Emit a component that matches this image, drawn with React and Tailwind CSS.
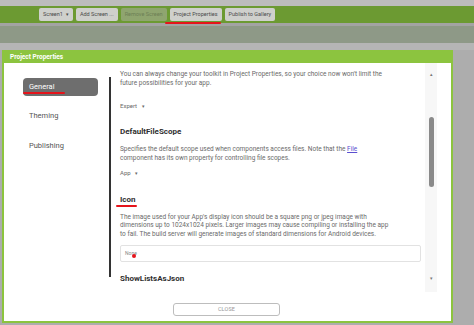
import React from 'react';

const Caret = () => <span className="ml-[3px] text-[5px] align-middle">▾</span>;

function ToolButton({ children, disabled }) {
  return (
    <div
      className={
        'h-[13px] px-[4px] flex items-center rounded-[2px] text-[5.5px] ' +
        (disabled ? 'bg-[#8fa56f] text-[#6d7f55]' : 'bg-[#cfd0cc] text-[#4a4a4a]')
      }
    >
      {children}
    </div>
  );
}

const Title = ({ children, className = '' }) => (
  <div className={'text-[8px] font-bold text-[#2f2f2f] leading-[10px] ' + className}>{children}</div>
);

export default function App() {
  return (
    <div
      className="w-[474px] h-[325px] bg-[#adadad] overflow-hidden relative flex flex-col"
      style={{ fontFamily: 'Roboto, "Liberation Sans", sans-serif' }}
    >
      {/* page behind the overlay */}
      <div className="h-[6px] shrink-0 bg-[#bcbcbc]" />
      <div className="h-[17px] shrink-0 bg-[#6c9a32] flex items-center gap-[3px] pl-[39px]">
        <ToolButton>Screen1 <Caret /></ToolButton>
        <ToolButton>Add Screen ...</ToolButton>
        <ToolButton disabled>Remove Screen</ToolButton>
        <ToolButton>Project Properties</ToolButton>
        <ToolButton>Publish to Gallery</ToolButton>
      </div>
      <div className="h-[3px] shrink-0 bg-[#a3a3a3]" />
      <div className="h-[17px] shrink-0 bg-[#8e9987]" />
      <div className="h-[7px] shrink-0 bg-[#b5b5b5]" />

      <div className="flex pl-[2px]">
        {/* dialog */}
        <div className="w-[451px] shrink-0 h-[273px] border-2 border-[#8cc43f] bg-white flex flex-col">
          <div className="h-[11px] shrink-0 bg-[#8cc43f] px-[6px] flex items-center text-white font-bold text-[6.5px]">
            Project Properties
          </div>
          <div className="flex flex-1 min-h-0">
            {/* sidebar */}
            <div className="w-[105px] shrink-0 pl-[19px] pt-[15px] text-[7.5px] text-[#555]">
              <div className="w-[75px] h-[18px] rounded-[4px] bg-[#6e6e6e] text-white flex items-center pl-[6px]">
                General
              </div>
              <div className="pl-[6px] mt-[14px]">Theming</div>
              <div className="pl-[6px] mt-[19px]">Publishing</div>
            </div>
            {/* content */}
            <div className="flex-1 min-w-0 flex flex-col">
              <div className="flex h-[229px]">
                <div className="w-[2px] shrink-0 bg-[#333] mt-[14px] h-[200px]" />
                <div className="flex-1 min-w-0 pl-[9px] pt-[7px] text-[6.5px] leading-[9px] text-[#6a6a6a] overflow-hidden">
                  <div>You can always change your toolkit in Project Properties, so your choice now won't limit the</div>
                  <div>future possibilities for your app.</div>
                  <div className="mt-[13px] text-[6px]">Expert <Caret /></div>
                  <Title className="mt-[16px]">DefaultFileScope</Title>
                  <div className="mt-[8px]">
                    Specifies the default scope used when components access files. Note that the{' '}
                    <span className="text-[#5b4fd0] underline">File</span>
                  </div>
                  <div>component has its own property for controlling file scopes.</div>
                  <div className="mt-[5px] text-[6px]">App <Caret /></div>
                  <Title className="mt-[17px]">Icon</Title>
                  <div className="mt-[8px] leading-[8.5px]">
                    <div>The image used for your App's display icon should be a square png or jpeg image with</div>
                    <div>dimensions up to 1024x1024 pixels. Larger images may cause compiling or installing the app</div>
                    <div>to fail. The build server will generate images of standard dimensions for Android devices.</div>
                  </div>
                  <div className="mt-[7px] w-[301px] h-[17px] border border-[#e2e2e2] rounded-[2px] flex items-center pl-[4px] text-[5px] text-[#888]">
                    None
                  </div>
                  <Title className="mt-[12px]">ShowListsAsJson</Title>
                </div>
                {/* scrollbar */}
                <div className="w-[12px] shrink-0 mr-[14px] bg-[#f7f7f7] flex flex-col items-center pt-[8px] pb-[10px] text-[5px] text-[#777]">
                  <span>▴</span>
                  <div className="w-[5px] h-[70px] bg-[#8a8a8a] rounded-full mt-[38px]" />
                  <div className="flex-1" />
                  <span>▾</span>
                </div>
              </div>
              <div className="flex-1 flex items-start pt-[11px] pl-[64px]">
                <div className="w-[107px] h-[13px] border border-[#bdbdbd] rounded-[3px] flex items-center justify-center text-[5.5px] text-[#999] tracking-wide">
                  CLOSE
                </div>
              </div>
            </div>
          </div>
        </div>
        <div className="flex-1 bg-[#adadad]" />
      </div>

      {/* red annotation marks */}
      <div className="absolute left-[165px] top-[22px] w-[56px] h-[2px] rounded-full bg-[#e5141b]" />
      <div className="absolute left-[23px] top-[92px] w-[42px] h-[2px] rounded-full bg-[#e5141b]" />
      <div className="absolute left-[116px] top-[205px] w-[21px] h-[2px] rounded-full bg-[#e5141b]" />
      <div className="absolute left-[132px] top-[254px] w-[4px] h-[4px] rounded-full bg-[#e5141b]" />
    </div>
  );
}
